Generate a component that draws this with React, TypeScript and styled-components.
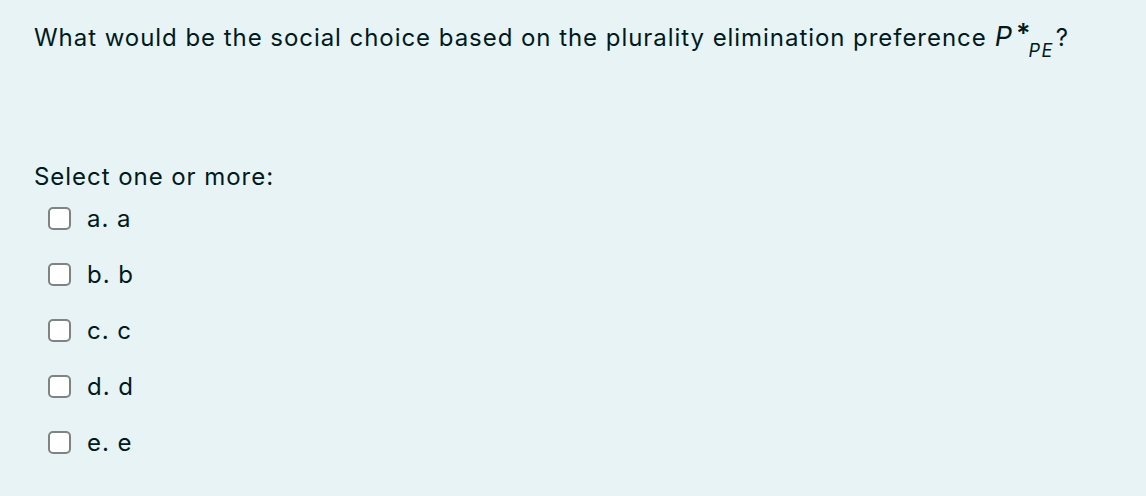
import * as React from 'react';
import styled, { createGlobalStyle } from 'styled-components';

const GlobalStyle = createGlobalStyle`
    html, body {
        margin: 0;
        padding: 0;
        background: #e7f3f5;
    }
    body {
        font-family: "Inter", "Liberation Sans", sans-serif;
        color: #001a1e;
    }
`;

const Panel = styled.div`
    width: 1146px;
    height: 496px;
    box-sizing: border-box;
    background: #e7f3f5;
    padding: 18px 34px 0 34px;
    font-size: 24px;
    letter-spacing: 0.95px;
`;

const QText = styled.div`
    line-height: 38px;
    height: 144px;
`;

const MathP = styled.span`
    font-style: italic;
    font-size: 27px;
    margin-left: 8px;
    letter-spacing: 0;
`;

const Star = styled.span`
    position: relative;
    top: -3px;
    font-size: 27px;
    font-weight: 600;
    margin-left: 4px;
    letter-spacing: 0;
`;

const Sub = styled.span`
    font-style: italic;
    font-size: 18px;
    position: relative;
    top: 11px;
    margin-left: -2px;
    margin-right: 2px;
    letter-spacing: 1.5px;
`;

const Prompt = styled.div`
    line-height: 28px;
    padding-top: 1px;
`;

const Options = styled.div`
    display: flex;
    flex-direction: column;
    margin-top: -1px;
`;

const OptionRow = styled.label`
    display: flex;
    align-items: center;
    height: 56px;
    padding-left: 14px;
`;

const Box = styled.span`
    width: 19px;
    height: 19px;
    border: 2px solid #808385;
    border-radius: 5px;
    background: #ffffff;
    flex: none;
    margin-right: 16px;
`;

const options = ['a', 'b', 'c', 'd', 'e'];

export default function App() {
    return (
        <Panel>
            <GlobalStyle />
            <QText>
                What would be the social choice based on the plurality elimination preference
                <MathP>P</MathP>
                <Star>*</Star>
                <Sub>PE</Sub>?
            </QText>
            <Prompt>Select one or more:</Prompt>
            <Options>
                {options.map((o) => (
                    <OptionRow key={o}>
                        <Box />
                        <span>{o}. {o}</span>
                    </OptionRow>
                ))}
            </Options>
        </Panel>
    );
}
